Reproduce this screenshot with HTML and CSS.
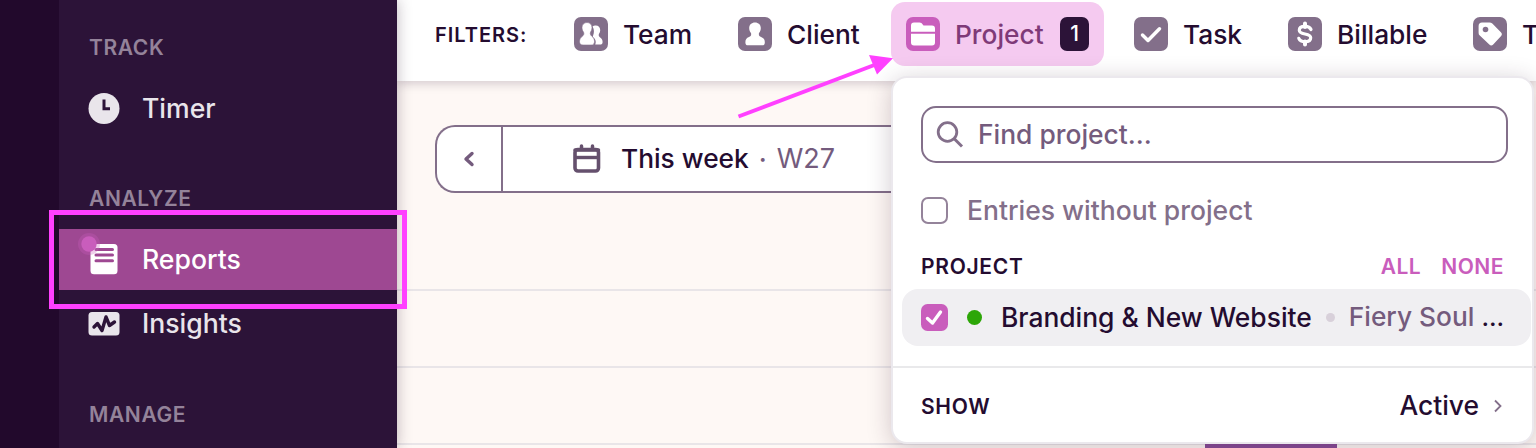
FILE: index.html
```html
<!DOCTYPE html>
<html lang="en">
<head>
<meta charset="utf-8">
<title>Reports</title>
<link rel="stylesheet" href="styles.css">
</head>
<body>
<div class="app">
  <div class="rail"></div>
  <nav class="sidebar">
    <h2 class="nav-label">TRACK</h2>
    <a class="nav-item">
      <svg class="nav-icon" viewBox="0 0 32 32"><circle cx="16" cy="15.500" r="15.500" fill="#e9e5eb"/><path d="M16 6.500V15.800H22" fill="none" stroke="#2c1338" stroke-width="3"/></svg>
      <span class="nav-text timer">Timer</span>
    </a>
    <h2 class="nav-label">ANALYZE</h2>
    <a class="nav-item active">
      <svg class="nav-icon" viewBox="0 0 32 32"><rect x="2.500" y="0" width="27" height="30.300" rx="3.500" fill="#fff"/><path d="M8 5.500H24.500M8 11H24.500M8 16.700H24.500" stroke="#9e4892" stroke-width="3" stroke-linecap="round"/><circle cx="1" cy="0" r="11" fill="#c95dbc" fill-opacity=".3"/><circle cx="1" cy="0" r="7.700" fill="#c95dbc"/></svg>
      <span class="nav-text reports">Reports</span>
    </a>
    <a class="nav-item second">
      <svg class="nav-icon" viewBox="0 0 32 32"><rect x=".5" y="4" width="31" height="23.500" rx="3.500" fill="#e9e5eb"/><path d="M6 19L9.500 15.500L14 22.500L18 9L21.500 17.500L26.500 14" fill="none" stroke="#2c1338" stroke-width="3.400" stroke-linecap="round" stroke-linejoin="round"/></svg>
      <span class="nav-text insights">Insights</span>
    </a>
    <h2 class="nav-label manage">MANAGE</h2>
  </nav>
  <main class="main">
    <header class="filters">
      <span class="filters-label">FILTERS:</span>
      <div class="filter">
        <svg class="filter-icon" viewBox="0 0 34 34"><rect width="34" height="34" rx="7" fill="#836f8a"/><g fill="#fff"><path d="M18.500 9.500c1-.9 2.200-1.200 3.300-1 2.600 0 4.400 1.800 4.400 4.600 0 1.500-.4 2.800-1.200 3.700-.6 1.400-.2 2.700.9 3.500 1.800 1.200 2.700 2.700 2.700 4.600 0 1.800-.9 2.600-2.800 2.600h-4.600c1-2.300.7-4.800-1.500-6.800-.9-.8-1-1.500-.5-2.500 1-2.500 1.200-6-.7-8.700z"/><path d="M13 5.500c2.900 0 5 2 5 5.100 0 1.800-.5 3.300-1.400 4.400-.7 1.600-.2 3.100 1.200 4.200 1.800 1.400 2.700 3 2.700 5.200 0 2.400-1 3.600-3.400 3.600H9c-2.500 0-3.500-1.100-3.500-3.400 0-2.300 1-4 2.900-5.400 1.500-1.100 1.800-2.600 1.100-4.200-1-1.100-1.500-2.600-1.500-4.400 0-3.100 2.100-5.100 5-5.100z" stroke="#836f8a" stroke-width=".6"/></g></svg>
        <span class="filter-text team">Team</span>
      </div>
      <div class="filter">
        <svg class="filter-icon" viewBox="0 0 34 34"><rect width="34" height="34" rx="7" fill="#836f8a"/><path d="M17 5.500c3.400 0 5.800 2.200 5.800 5.600 0 2-.6 3.700-1.800 4.900-.5 2 .2 3.300 2.100 4 2.600 1 3.700 2.600 3.700 4.900v.8c0 1.700-.9 2.600-2.600 2.600H10c-1.700 0-2.600-.9-2.600-2.600v-.8c0-2.300 1.100-3.900 3.600-4.900 1.900-.7 2.500-2 2-4-1.200-1.200-1.800-2.900-1.800-4.900 0-3.400 2.400-5.600 5.800-5.600z" fill="#fff"/></svg>
        <span class="filter-text client">Client</span>
      </div>
      <div class="filter">
        <div class="pill">
          <svg class="filter-icon" viewBox="0 0 34 34"><rect width="34" height="34" rx="7" fill="#c95dbc"/><path d="M8 5.500h5.500c1.500 0 2.500.8 3.200 2l.8 1H26q3 0 3 3v3.200H5V8.500q0-3 3-3zM5 16.700h24v8.800q0 3-3 3H8q-3 0-3-3z" fill="#fff"/></svg>
          <span class="filter-text project">Project</span>
          <span class="count">1</span>
        </div>
      </div>
      <div class="filter">
        <svg class="filter-icon" viewBox="0 0 34 34"><rect width="34" height="34" rx="7" fill="#836f8a"/><path d="M8.500 18L14 23.500L25.500 11.800" fill="none" stroke="#fff" stroke-width="3.500" stroke-linecap="round" stroke-linejoin="round"/></svg>
        <span class="filter-text task">Task</span>
      </div>
      <div class="filter">
        <svg class="filter-icon" viewBox="0 0 34 34"><rect width="34" height="34" rx="7" fill="#836f8a"/><path d="M17 6.500V10M17 24.500V27.500" stroke="#fff" stroke-width="4" stroke-linecap="round"/><path d="M23 12.500C22 10.200 19.800 9.400 17 9.400C13.500 9.400 11.300 10.900 11.300 13.200C11.300 18.500 22.700 15.500 22.700 20.800C22.700 23.300 20.300 24.700 17 24.700C14 24.700 11.800 23.700 10.800 21.300" fill="none" stroke="#fff" stroke-width="3.200" stroke-linecap="round"/></svg>
        <span class="filter-text billable">Billable</span>
      </div>
      <div class="filter">
        <svg class="filter-icon" viewBox="0 0 34 34"><rect width="34" height="34" rx="7" fill="#836f8a"/><path d="M9 5.500h7.500c1.100 0 2 .4 2.800 1.100l8.600 8.600c1.300 1.300 1.300 2.800 0 4.100l-7.700 8.200c-1.200 1.200-2.700 1.200-3.900 0l-9.500-8.900c-.8-.8-1.200-1.600-1.200-2.700V9c0-2.200 1.200-3.500 3.400-3.500z" fill="#fff"/><circle cx="12.500" cy="12.500" r="2.800" fill="#836f8a"/></svg>
        <span class="filter-text">Tag</span>
      </div>
    </header>
    <section class="report">
      <div class="period">
        <div class="period-prev"><svg class="chevron" viewBox="0 0 12 18"><path d="M9 3.500L3 9L9 14.500" fill="none" stroke="#745b7d" stroke-width="3.400" stroke-linecap="round" stroke-linejoin="round"/></svg></div>
        <div class="period-current">
          <svg class="calendar" viewBox="0 0 28 30"><rect x="2" y="5.500" width="23.500" height="21.500" rx="3" fill="none" stroke="#65506d" stroke-width="3.600"/><path d="M2 6H25.500M8.500 2V6M19.500 2V6" stroke="#65506d" stroke-width="3.500" stroke-linecap="round"/><path d="M2 13.500H25.500" stroke="#65506d" stroke-width="3.400"/></svg>
          <span class="period-text">This week</span><span class="period-dot">·</span><span class="period-week">W27</span>
        </div>
      </div>
      <div class="row first"></div>
      <div class="row"></div>
      <div class="row last"><span class="bar"></span></div>
    </section>
  </main>

  <div class="dropdown">
    <div class="search">
      <svg class="search-icon" viewBox="0 0 28 28"><circle cx="11.500" cy="11" r="9.300" fill="none" stroke="#836f8a" stroke-width="2.800"/><path d="M18 17.500L26 25.500" stroke="#836f8a" stroke-width="3"/></svg>
      <span class="search-text">Find project...</span>
    </div>
    <div class="without"><span class="box"></span><span class="without-text">Entries without project</span></div>
    <div class="group"><span class="caps group-title">PROJECT</span><span class="caps pick all">ALL</span><span class="caps pick none">NONE</span></div>
    <div class="option">
      <svg class="checked" viewBox="0 0 27 27"><rect width="27" height="27" rx="6.500" fill="#c95dbc"/><path d="M6.500 14.500L11.500 19L19.500 8" fill="none" stroke="#fff" stroke-width="3.400" stroke-linecap="round" stroke-linejoin="round"/></svg>
      <span class="color-dot"></span>
      <span class="option-name">Branding &amp; New Website</span>
      <span class="separator-dot"></span>
      <span class="option-client">Fiery Soul</span>
      <span class="option-more">...</span>
    </div>
    <div class="show"><span class="caps show-title">SHOW</span><span class="show-value">Active</span><svg class="show-chevron" viewBox="0 0 10 14"><path d="M2 1.500L7.500 7L2 12.500" fill="none" stroke="#836f8a" stroke-width="1.800"/></svg></div>
  </div>

  <div class="callout"></div>
  <svg class="arrow" viewBox="0 0 160 70"><path d="M3.500 65.500L142 13" stroke="#ff40ff" stroke-width="4"/><path d="M158 7.300L134 4L142 23.500Z" fill="#ff40ff"/></svg>
</div>
</body>
</html>
```
FILE: styles.css
```css
* { box-sizing: border-box; }
body { margin: 0; font-family: Inter, "Liberation Sans", sans-serif; color: #240c30; }
svg { display: block; flex: none; overflow: visible; }
span { white-space: nowrap; }
.app { position: relative; display: flex; width: 1536px; height: 448px; overflow: hidden; }
.rail { width: 59px; background: #22092c; }
.sidebar { position: relative; z-index: 2; width: 338px; padding-top: 36px; background: #2c1338; box-shadow: 0 0 14px rgba(40, 20, 40, .3); clip-path: inset(0 -20px 0 0); }
.nav-label { margin: 0 0 18px 30px; height: 24px; line-height: 24px; font-size: 21px; font-weight: 600; letter-spacing: .6px; color: #94839a; }
.nav-item { display: flex; align-items: center; height: 61px; margin-bottom: 48px; padding-left: 29px; gap: 22px; color: #e9e5eb; }
.nav-item.active { margin-bottom: 3px; background: #9e4892; color: #fff; }
.nav-item.second { margin-bottom: 49px; }
.nav-icon { width: 32px; height: 32px; }
.nav-text { padding-bottom: 2px; font-size: 26.6px; font-weight: 500; line-height: 32px; }
.main { display: flex; flex-direction: column; flex: 1; min-width: 0; background: #fef8f5; }
.filters { position: relative; z-index: 1; display: grid; flex: none; grid-template-columns: 139px 164px 153px 243px 154px 185px 120px; align-items: center; height: 81px; padding: 0 0 13px 38px; background: #fff; box-shadow: 0 2px 10px rgba(44, 19, 56, .22); }
.filters-label { padding-top: 1px; font-size: 20px; font-weight: 600; letter-spacing: 1px; }
.filter { display: flex; align-items: center; gap: 15px; }
.filter-icon { width: 34px; height: 34px; }
.filter-text { padding-top: 1px; font-size: 26.3px; font-weight: 500; line-height: 34px; }
.pill { display: flex; align-items: center; width: 213px; height: 64px; padding: 0 15px; gap: 15px; border-radius: 14px; background: #f5caf0; color: #7f3a78; }
.count { width: 29px; height: 34px; margin-left: auto; border-radius: 7px; background: #2c1338; color: #fff; font-size: 21px; font-weight: 500; line-height: 34px; text-align: center; }
.report { flex: 1; padding-top: 44px; }
.period { display: flex; width: 640px; height: 68px; margin-left: 38px; border: 2px solid #836f8a; border-right: 0; border-radius: 20px 0 0 20px; background: #fff; }
.period-prev { display: flex; align-items: center; justify-content: center; width: 66px; border-right: 2px solid #836f8a; }
.chevron { width: 12px; height: 18px; }
.period-current { display: flex; align-items: center; padding-left: 70px; }
.calendar { width: 28px; height: 30px; margin-right: 20px; }
.period-text, .period-dot { font-size: 26.3px; font-weight: 500; }
.period-text { padding-bottom: 1px; }
.period-dot { width: 28px; text-align: center; color: #745b7d; }
.period-week { padding-bottom: 1px; font-size: 27px; font-weight: 400; color: #745b7d; }
.row { height: 77px; border-top: 2px solid #e9e5e8; }
.row.first { margin-top: 96px; }
.row.last { height: 8px; padding-left: 808px; }
.bar { display: block; width: 132px; height: 8px; margin-top: -1px; background: #884c98; }
.dropdown { position: absolute; z-index: 3; left: 891px; top: 76px; width: 643px; height: 368px; padding: 28px 0 0; border: 2px solid #ebe8ed; border-radius: 16px; background: #fff; box-shadow: 0 4px 24px rgba(44, 19, 40, .22); }
.search { display: flex; align-items: center; width: 587px; height: 57px; margin-left: 28px; padding-left: 13px; gap: 14px; border: 2px solid #836f8a; border-radius: 15px; color: #745b7d; }
.search-icon { width: 28px; height: 28px; }
.search-text, .without-text, .option, .show-value { font-size: 26.4px; font-weight: 500; }
.search-text, .option-name, .option-client, .option-more, .show-value { padding-bottom: 2px; }
.without { display: flex; align-items: center; height: 34px; margin: 30px 0 0 28px; gap: 19px; color: #836f8a; }
.without-text { font-size: 26.5px; }
.box { width: 27px; height: 27px; border: 2px solid #94839a; border-radius: 7px; }
.group { display: flex; align-items: center; height: 26px; margin: 26px 28px 0 28px; }
.caps { font-size: 21px; font-weight: 600; letter-spacing: .7px; }
.group-title { margin-right: auto; }
.pick { margin-left: 20px; letter-spacing: .5px; color: #c95dbc; }
.option { display: flex; align-items: center; width: 629px; height: 57px; margin: 10px 0 0 9px; padding-left: 19px; border-radius: 16px; background: #f0eff2; }
.checked { width: 27px; height: 27px; margin-right: 19px; }
.color-dot { width: 15px; height: 15px; margin-right: 19px; border-radius: 50%; background: #2da608; }
.separator-dot { width: 9px; height: 9px; margin: 0 14px; border-radius: 50%; background: #d8d0da; }
.option-client { font-size: 26.3px; color: #745b7d; }
.option-more { margin-left: 7px; font-size: 25px; }
.show { display: flex; align-items: center; height: 76px; margin-top: 20px; padding: 2px 29px 0 28px; border-top: 2px solid #e9e9eb; }
.show-title { margin-right: auto; }
.show-chevron { width: 10px; height: 14px; margin-left: 14px; }
.callout { position: absolute; z-index: 4; left: 49px; top: 210px; width: 358px; height: 99px; border: 5px solid #ff40ff; }
.arrow { position: absolute; z-index: 4; left: 735px; top: 51px; width: 160px; height: 70px; }
```
